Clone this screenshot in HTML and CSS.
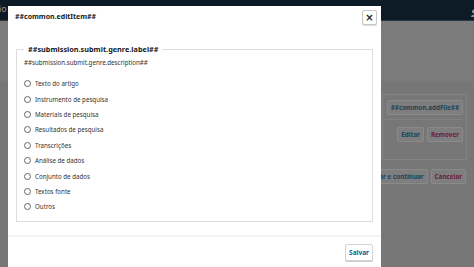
FILE: index.html
```html
<!DOCTYPE html>
<html lang="pt">
<head>
<meta charset="utf-8">
<title>Edit item</title>
<link rel="stylesheet" href="styles.css">
</head>
<body>
<div class="page">
  <header class="topbar">
    <span class="crumb">ção</span>
    <svg class="user-icon" width="6" height="8" viewBox="0 0 6 8"><circle cx="3" cy="2.5" r="2" fill="#8d959b"/><path d="M0 8 C0 5 6 5 6 8 Z" fill="#8d959b"/></svg>
  </header>
  <div class="main">
    <div class="side">
      <div class="panel">
        <div class="panel-top">
          <span class="bbtn">##common.addFile##</span>
        </div>
        <div class="panel-row">
          <span class="bbtn">Editar</span>
          <span class="bbtn danger">Remover</span>
        </div>
      </div>
      <div class="actions">
        <span class="bbtn">Salvar e continuar</span>
        <span class="bbtn danger">Cancelar</span>
      </div>
    </div>
  </div>
</div>

<div class="modal">
  <div class="modal-head">
    <h2 class="modal-title">##common.editItem##</h2>
    <button class="close" type="button">&times;</button>
  </div>
  <div class="modal-body">
    <fieldset class="genre">
      <legend>##submission.submit.genre.label##</legend>
      <p class="desc">##submission.submit.genre.description##</p>
      <ul class="options">
        <li><span class="radio"></span>Texto do artigo</li>
        <li><span class="radio"></span>Instrumento de pesquisa</li>
        <li><span class="radio"></span>Materiais de pesquisa</li>
        <li><span class="radio"></span>Resultados de pesquisa</li>
        <li><span class="radio"></span>Transcrições</li>
        <li><span class="radio"></span>Análise de dados</li>
        <li><span class="radio"></span>Conjunto de dados</li>
        <li><span class="radio"></span>Textos fonte</li>
        <li><span class="radio"></span>Outros</li>
      </ul>
    </fieldset>
  </div>
  <div class="modal-foot">
    <button class="save" type="button">Salvar</button>
  </div>
</div>
</body>
</html>
```
FILE: styles.css
```css
* { box-sizing: border-box; }
html, body {
  margin: 0;
  width: 474px;
  height: 267px;
  overflow: hidden;
  font-family: "Noto Sans", "DejaVu Sans", sans-serif;
}
body { background: #777777; }

.page { display: flex; flex-direction: column; height: 267px; }
.topbar {
  height: 21px;
  flex: none;
  background: #0c1b26;
  border-bottom: 1px solid #2a3640;
  display: flex;
  align-items: center;
  justify-content: space-between;
  color: #8d959b;
  font-size: 9px;
}
.crumb { margin-left: -8px; margin-top: -3px; }
.user-icon { margin-right: -3px; margin-top: 6px; }

.main {
  flex: 1;
  display: flex;
  justify-content: flex-end;
  padding: 73px 7px 0 0;
  background: linear-gradient(#7b7b7b 0, #7b7b7b 60px, #777 61px);
}
.side { width: 90px; display: flex; flex-direction: column; align-items: flex-end; }
.panel {
  width: 85px;
  height: 66px;
  border: 1px solid #838383;
  display: flex;
  flex-direction: column;
}
.panel-top {
  height: 25px;
  border-bottom: 1px solid #818181;
  display: flex;
  justify-content: flex-end;
  align-items: center;
  padding-right: 3px;
}
.panel-row {
  display: flex;
  justify-content: flex-end;
  gap: 3px;
  padding: 7px 3px 0 0;
}
.bbtn {
  display: inline-flex;
  align-items: center;
  height: 15px;
  padding: 0 3px;
  background: #7e7e7e;
  border: 1px solid #8a8a8a;
  border-radius: 2px;
  color: #1e4457;
  font-size: 6.3px;
  font-weight: 700;
  white-space: nowrap;
}
.bbtn.danger { color: #6f1a40; }
.actions {
  display: flex;
  gap: 3px;
  margin-top: 9px;
  margin-right: 1px;
}

.modal {
  position: absolute;
  left: 8px;
  top: 6px;
  width: 373px;
  height: 261px;
  background: #ffffff;
  display: flex;
  flex-direction: column;
}
.modal-head {
  height: 38px;
  flex: none;
  display: flex;
  justify-content: space-between;
  align-items: flex-start;
  padding: 4px 4px 0 7px;
}
.modal-title {
  margin: 2px 0 0;
  font-size: 7px;
  line-height: 10px;
  font-weight: 700;
  color: #1a1a1a;
}
.close {
  width: 15px;
  height: 15px;
  padding: 0;
  border: 1px solid #c8c8c8;
  border-radius: 2px;
  background: #fff;
  box-shadow: 0 1px 0 #ddd;
  color: #222;
  font-size: 10px;
  font-weight: 700;
  line-height: 12px;
  font-family: "DejaVu Sans", sans-serif;
}
.modal-body {
  flex: none;
  padding: 0 8px 13px;
  border-bottom: 2px solid #f3f3f3;
}
.genre {
  margin: 0;
  padding: 0 0 6px 7px;
  border: 1px solid #dddddd;
}
.genre legend {
  margin-left: 0;
  padding: 0 4px;
  font-size: 7.3px;
  font-weight: 700;
  color: #1a1a1a;
  line-height: 10px;
}
.desc {
  margin: 4px 0 8px;
  font-size: 6.2px;
  color: #333;
  line-height: 10px;
}
.options { list-style: none; margin: 0; padding: 0; }
.options li {
  height: 15.4px;
  display: flex;
  align-items: center;
  font-size: 6.2px;
  color: #333;
}
.radio {
  width: 7px;
  height: 7px;
  border: 1px solid #666;
  border-radius: 50%;
  margin: 0 4px 0 0;
  flex: none;
}
.modal-foot {
  display: flex;
  justify-content: flex-end;
  padding: 7px 8px 0 0;
}
.save {
  height: 17px;
  padding: 0 3px;
  background: #fff;
  border: 1px solid #d4d4d4;
  border-radius: 2px;
  box-shadow: 0 1px 0 #ccc;
  color: #006798;
  font-family: "Noto Sans", sans-serif;
  font-size: 6.5px;
  font-weight: 700;
}
```
